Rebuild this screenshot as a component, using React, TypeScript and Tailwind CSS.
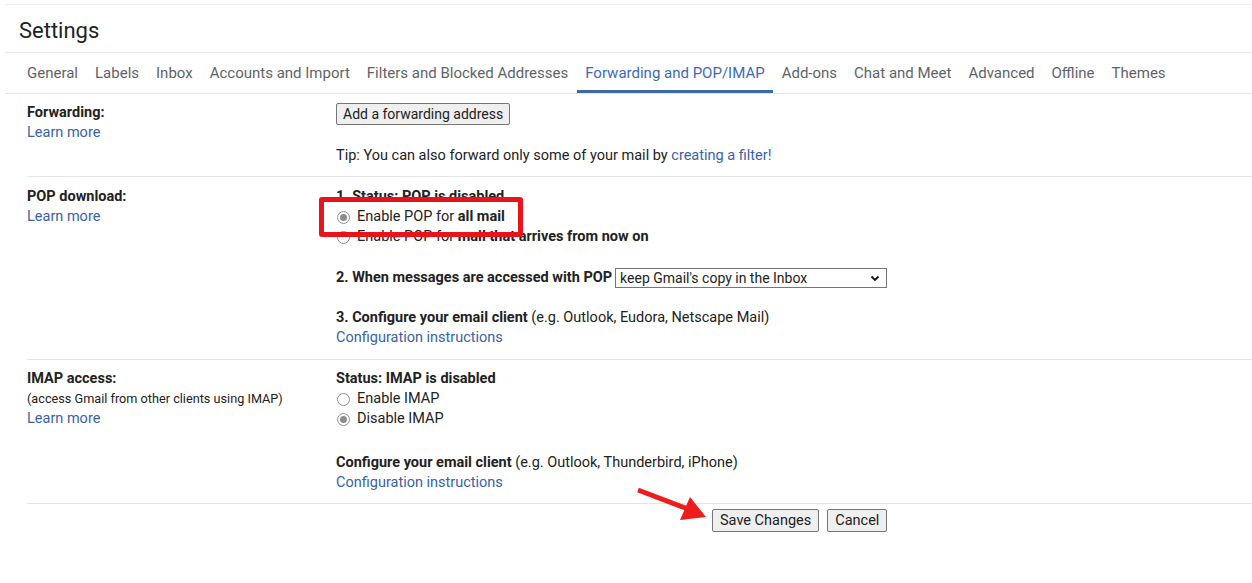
import React from "react";

const tabs = [
  "General",
  "Labels",
  "Inbox",
  "Accounts and Import",
  "Filters and Blocked Addresses",
  "Forwarding and POP/IMAP",
  "Add-ons",
  "Chat and Meet",
  "Advanced",
  "Offline",
  "Themes",
];

function Radio({ checked, children }: { checked?: boolean; children: React.ReactNode }) {
  return (
    <div className="flex h-5 items-center">
      <span className="ml-[1px] mr-[7px] flex h-[13px] w-[13px] items-center justify-center rounded-full border border-[#8f8f8f] bg-white">
        {checked && <span className="h-[7px] w-[7px] rounded-full bg-[#8c8c8c]" />}
      </span>
      <span>{children}</span>
    </div>
  );
}

function Link({ children }: { children: React.ReactNode }) {
  return <div className="h-5 leading-5 text-[#3a62a6]">{children}</div>;
}

export default function App() {
  return (
    <div className="relative h-[583px] w-[1252px] overflow-hidden bg-white font-['Roboto',sans-serif] text-[14.5px] leading-5 text-[#222]">
      <div className="ml-[5px] mt-[4px] h-px bg-[#f0f0f0]" />
      <div className="ml-[5px] flex h-[48px] items-center border-b border-[#e4e4e4] pl-[14px] pt-[4px]">
        <h1 className="text-[22px] text-[#222]">Settings</h1>
      </div>

      <div className="ml-[5px] flex h-[41px] border-b border-[#e4e4e4] pl-[14px]">
        {tabs.map((t) => {
          const active = t === "Forwarding and POP/IMAP";
          return (
            <div
              key={t}
              className={
                active
                  ? "mr-px flex items-center border-b-[3px] border-[#3d6aa4] px-2 pt-[2px] text-[15px] text-[#3b6bb5]"
                  : "mr-px flex items-center border-b-[3px] border-transparent px-2 pt-[2px] text-[15px] text-[#5f6368]"
              }
            >
              {t}
            </div>
          );
        })}
      </div>

      <div className="pl-[27px]">
        <div className="flex border-b border-[#e4e4e4] pb-[10px] pt-[9px]">
          <div className="w-[309px]">
            <div className="font-bold">Forwarding:</div>
            <Link>Learn more</Link>
          </div>
          <div>
            <button className="h-[22px] rounded-[2px] border border-[#767676] bg-[#efefef] px-[6px] text-[14px] leading-5 text-[#222]">
              Add a forwarding address
            </button>
            <div className="mt-[21px]">
              Tip: You can also forward only some of your mail by{" "}
              <span className="text-[#3a62a6]">creating a filter!</span>
            </div>
          </div>
        </div>

        <div className="flex border-b border-[#e4e4e4] pb-[11px] pt-[10px]">
          <div className="w-[309px]">
            <div className="font-bold">POP download:</div>
            <Link>Learn more</Link>
          </div>
          <div>
            <div className="font-bold">1. Status: POP is disabled</div>
            <Radio checked>
              Enable POP for <b>all mail</b>
            </Radio>
            <Radio>
              Enable POP for <b>mail that arrives from now on</b>
            </Radio>
            <div className="mt-[21px] flex h-5 items-center">
              <b>2. When messages are accessed with POP</b>
              <div className="ml-[3px] flex h-[20px] w-[272px] items-center justify-between border border-[#767676] pl-[4px] pr-[6px] text-[14px]">
                <span>keep Gmail's copy in the Inbox</span>
                <svg width="10" height="7" viewBox="0 0 10 7">
                  <path d="M1.5 1.5 L5 5 L8.5 1.5" fill="none" stroke="#111" strokeWidth="1.8" />
                </svg>
              </div>
            </div>
            <div className="mt-[20px]">
              <b>3. Configure your email client</b> (e.g. Outlook, Eudora, Netscape Mail)
            </div>
            <Link>Configuration instructions</Link>
          </div>
        </div>

        <div className="flex border-b border-[#e4e4e4] pb-[10px] pt-[9px]">
          <div className="w-[309px]">
            <div className="font-bold">IMAP access:</div>
            <div className="text-[12.7px]">(access Gmail from other clients using IMAP)</div>
            <Link>Learn more</Link>
          </div>
          <div>
            <div className="font-bold">Status: IMAP is disabled</div>
            <Radio>Enable IMAP</Radio>
            <Radio checked>Disable IMAP</Radio>
            <div className="mt-[24px]">
              <b>Configure your email client</b> (e.g. Outlook, Thunderbird, iPhone)
            </div>
            <Link>Configuration instructions</Link>
          </div>
        </div>

        <div className="flex gap-2 pl-[685px] pt-[5px]">
          <button className="h-[23px] rounded-[2px] border border-[#767676] bg-[#efefef] px-[7px] text-[14.5px] leading-5 text-[#222]">
            Save Changes
          </button>
          <button className="h-[23px] rounded-[2px] border border-[#767676] bg-[#efefef] px-[7px] text-[14.5px] leading-5 text-[#222]">
            Cancel
          </button>
        </div>
      </div>

      <div className="absolute left-[319px] top-[197px] h-[40px] w-[204px] rounded-[3px] border-[5px] border-[#e8141c]" />

      <svg className="absolute left-[630px] top-[482px]" width="85" height="45" viewBox="0 0 85 45">
        <line x1="8" y1="8" x2="58" y2="27" stroke="#ef1c1c" strokeWidth="5" />
        <polygon points="76,35 50,38 60,15" fill="#ef1c1c" />
      </svg>
    </div>
  );
}
